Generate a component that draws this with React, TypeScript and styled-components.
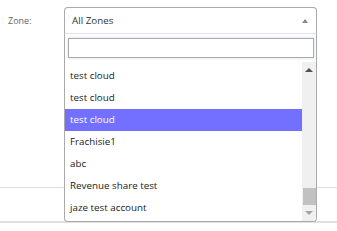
import styled, { createGlobalStyle } from 'styled-components'

const GlobalStyle = createGlobalStyle`
  body {
    margin: 0;
    background: #fff;
    font-family: "Open Sans", "Liberation Sans", sans-serif;
  }
`

const OPTIONS = [
  'test cloud',
  'test cloud',
  'test cloud',
  'Frachisie1',
  'abc',
  'Revenue share test',
  'jaze test account',
]
const ACTIVE = 2

const St = {
  Page: styled.div`
    width: 337px;
    height: 231px;
    padding-top: 7px;
    box-sizing: border-box;
    overflow: hidden;
  `,
  FieldRow: styled.div`
    display: flex;
    align-items: flex-start;
    height: 27px;
  `,
  Label: styled.label`
    width: 64px;
    padding-left: 8px;
    box-sizing: border-box;
    font-size: 9px;
    line-height: 27px;
    color: #666;
  `,
  Select: styled.div`
    position: relative;
    width: 253px;
    z-index: 10;
  `,
  Header: styled.div`
    display: flex;
    align-items: center;
    justify-content: space-between;
    height: 27px;
    box-sizing: border-box;
    padding: 0 6px 0 7px;
    border: 1px solid #aaa;
    border-bottom-color: #dde3ee;
    border-radius: 4px 4px 0 0;
    background: #fff;
    font-size: 9.8px;
    color: #333;
  `,
  Caret: styled.span`
    width: 0;
    height: 0;
    border-left: 3.5px solid transparent;
    border-right: 3.5px solid transparent;
    border-bottom: 4px solid #888;
    margin-right: 2px;
  `,
  Dropdown: styled.div`
    position: absolute;
    top: 100%;
    left: 0;
    width: 100%;
    box-sizing: border-box;
    border: 1px solid #aaa;
    border-top: none;
    border-radius: 0 0 4px 4px;
    background: #fff;
  `,
  SearchBox: styled.div`
    padding: 4px 2px 4px 3px;
  `,
  Search: styled.input`
    display: block;
    width: 100%;
    height: 20px;
    box-sizing: border-box;
    border: 1px solid #aaa;
    border-radius: 0;
    outline: none;
    box-shadow: 0 0 3px rgba(120, 160, 230, 0.35);
    font-family: inherit;
    font-size: 11px;
    padding: 0 4px;
    caret-color: #222;
  `,
  ListRow: styled.div`
    display: flex;
    height: 159px;
  `,
  Options: styled.ul`
    flex: 1;
    margin: 0;
    padding: 3px 0 0;
    list-style: none;
    overflow: hidden;
  `,
  Option: styled.li<{ active: boolean }>`
    height: 22px;
    line-height: 22px;
    padding-left: 5px;
    font-size: 9.8px;
    color: ${({ active }) => (active ? '#fff' : '#1a1a1a')};
    background: ${({ active }) => (active ? '#7470ff' : 'transparent')};
  `,
  Scrollbar: styled.div`
    display: flex;
    flex-direction: column;
    align-items: center;
    width: 14px;
    background: #f0f0f0;
    border-bottom-right-radius: 4px;
  `,
  ArrowButton: styled.div<{ down?: boolean }>`
    display: flex;
    align-items: center;
    justify-content: center;
    height: 16px;
    width: 100%;
    &::after {
      content: '';
      width: 0;
      height: 0;
      border-left: 4px solid transparent;
      border-right: 4px solid transparent;
      ${({ down }) => (down ? 'border-top: 4px solid #a3a3a3;' : 'border-bottom: 4px solid #505050;')}
    }
  `,
  Track: styled.div`
    flex: 1;
    width: 100%;
    padding: 110px 0 0 0;
    box-sizing: border-box;
  `,
  Thumb: styled.div`
    height: 17px;
    margin: 0 0 0 1px;
    width: 13px;
    background: #c1c1c1;
  `,
  Divider: styled.div`
    margin-top: 153px;
    height: 1px;
    background: #ddd;
  `,
  Footer: styled.div`
    margin-top: 33px;
    height: 2px;
    background: #e0e0e0;
  `,
}

const App = () => {
  return (
    <St.Page>
      <GlobalStyle />
      <St.FieldRow>
        <St.Label>Zone:</St.Label>
        <St.Select>
          <St.Header>
            <span>All Zones</span>
            <St.Caret />
          </St.Header>
          <St.Dropdown>
            <St.SearchBox>
              <St.Search type="text" autoFocus />
            </St.SearchBox>
            <St.ListRow>
              <St.Options>
                {OPTIONS.map((label, i) => (
                  <St.Option key={i} active={i === ACTIVE}>
                    {label}
                  </St.Option>
                ))}
              </St.Options>
              <St.Scrollbar>
                <St.ArrowButton />
                <St.Track>
                  <St.Thumb />
                </St.Track>
                <St.ArrowButton down />
              </St.Scrollbar>
            </St.ListRow>
          </St.Dropdown>
        </St.Select>
      </St.FieldRow>
      <St.Divider />
      <St.Footer />
    </St.Page>
  )
}

export default App
